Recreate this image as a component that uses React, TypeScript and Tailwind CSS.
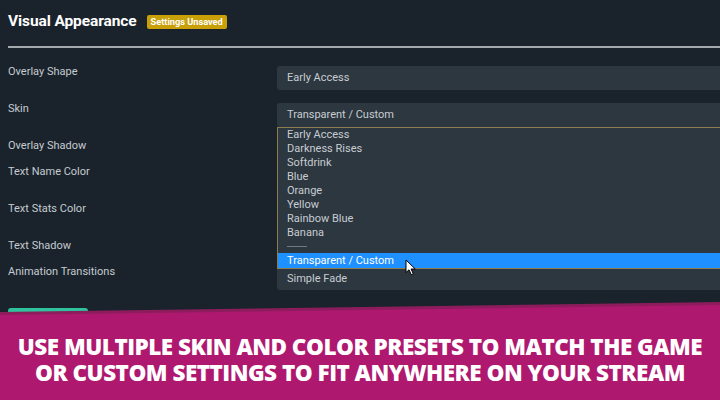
import React from "react";

const labelCls = "w-[269px] shrink-0 text-[11px] leading-[12px] text-[#c5cbd0]";
const selectCls = "flex-1 h-[24px] rounded-l-[3px] bg-[#2c3740] px-[10px] flex items-center text-[11px] text-[#c8cdd2]";

const items = [
  "Early Access",
  "Darkness Rises",
  "Softdrink",
  "Blue",
  "Orange",
  "Yellow",
  "Rainbow Blue",
  "Banana",
];

export default function App() {
  return (
    <div className="relative w-[720px] h-[400px] overflow-hidden bg-[#1a232c] font-['Roboto',sans-serif]">
      {/* Header */}
      <div className="ml-2 h-[48px] flex items-center gap-[10px] border-b-2 border-[#a3a8ad] pb-[3px]">
        <span className="text-[15.5px] font-bold text-white tracking-[-0.1px]">Visual Appearance</span>
        <span className="h-[14px] px-[4px] rounded-[2px] bg-[#c9a008] text-[9.2px] font-bold text-white flex items-center">
          Settings Unsaved
        </span>
      </div>

      {/* Form */}
      <div className="flex flex-col pl-2 pt-[18px]">
        <div className="flex h-[37px]">
          <div className={labelCls}>Overlay Shape</div>
          <div className={selectCls}>Early Access</div>
        </div>
        <div className="flex h-[37px]">
          <div className={labelCls}>Skin</div>
          <div className={selectCls}>Transparent / Custom</div>
        </div>
        <div className="flex h-[26px]">
          <div className={labelCls}>Overlay Shadow</div>
          <div className={selectCls}></div>
        </div>
        <div className="flex h-[37px]">
          <div className={labelCls}>Text Name Color</div>
          <div className={selectCls}></div>
        </div>
        <div className="flex h-[37px]">
          <div className={labelCls}>Text Stats Color</div>
          <div className={selectCls}></div>
        </div>
        <div className="flex h-[26px]">
          <div className={labelCls}>Text Shadow</div>
          <div className={selectCls}></div>
        </div>
        <div className="flex h-[38px]">
          <div className={labelCls}>Animation Transitions</div>
          <div className={selectCls + " pt-[2px]"}>Simple Fade</div>
        </div>
        <div>
          <button className="h-[20px] w-[80px] rounded-[3px] bg-[#2fc39d] text-[11px] font-bold text-white">
            Save Settings
          </button>
        </div>
      </div>

      {/* Open dropdown list */}
      <div className="absolute left-[277px] top-[127px] w-[460px] border border-[#8d7c4e] bg-[#2c3740] text-[11px] leading-[14px] text-[#c8cdd2]">
        {items.map((it) => (
          <div key={it} className="h-[14px] px-[9px]">
            {it}
          </div>
        ))}
        <div className="h-[13px] px-[9px] flex items-center">
          <div className="w-[20px] h-px bg-[#6f7a82]"></div>
        </div>
        <div className="h-[15px] px-[9px] bg-[#1e90ff] text-white leading-[15px]">Transparent / Custom</div>
      </div>

      {/* Cursor */}
      <svg className="absolute left-[405px] top-[259px]" width="12" height="17" viewBox="0 0 12 17">
        <path d="M1 1 L1 13.5 L4 10.8 L6.3 15.8 L8.3 14.9 L6.1 10 L10.3 10 Z" fill="#ffffff" stroke="#000000" strokeWidth="1" strokeLinejoin="round" />
      </svg>

      {/* Banner */}
      <div className="absolute left-0 bottom-0 w-[720px] h-[98px] bg-[#8d1c5d] [clip-path:polygon(0_10px,100%_0,100%_100%,0_100%)]"></div>
      <div className="absolute left-0 bottom-0 w-[720px] h-[95px] bg-[#ae186f] [clip-path:polygon(0_10px,100%_0,100%_100%,0_100%)] pt-[29px] text-center text-white font-['Open_Sans',sans-serif] font-extrabold text-[22.5px] leading-[26px] tracking-[-0.5px]">
        <p>
          USE MULTIPLE SKIN AND COLOR PRESETS TO MATCH THE GAME
          <br />
          OR CUSTOM SETTINGS TO FIT ANYWHERE ON YOUR STREAM
        </p>
      </div>
    </div>
  );
}
